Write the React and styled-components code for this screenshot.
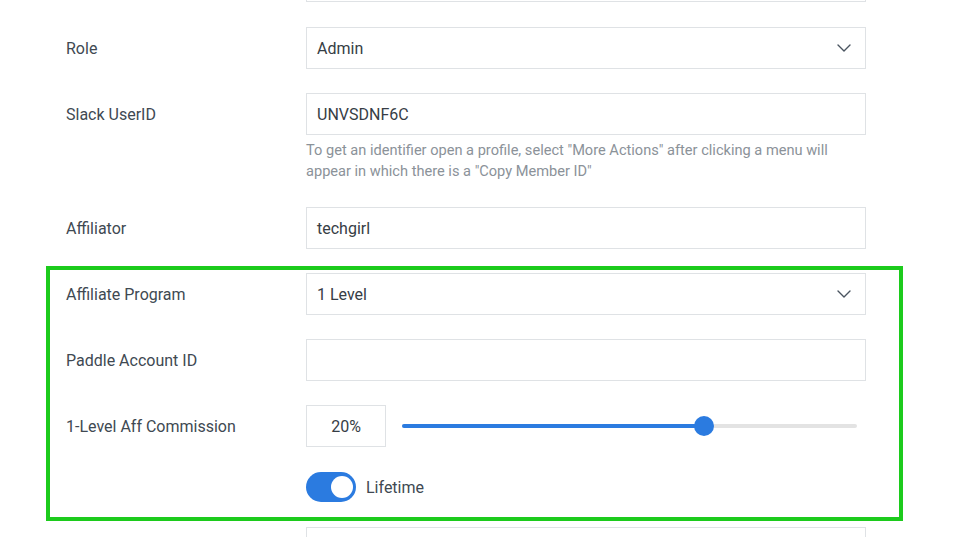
import styled, { createGlobalStyle } from 'styled-components'
import { ChevronDown } from 'lucide-react'

const GlobalStyle = createGlobalStyle`
    html, body {
        margin: 0;
        padding: 0;
        background: #ffffff;
        overflow: hidden;
    }
    body {
        font-family: Roboto, "Liberation Sans", sans-serif;
        color: #3d4651;
    }
`

export default function App() {
    return (
        <Page>
            <GlobalStyle />
            <Form>
                <Row first>
                    <Label />
                    <Field />
                </Row>

                <Row gap={25}>
                    <Label>Role</Label>
                    <Select value="Admin" />
                </Row>

                <Row gap={24}>
                    <Label>Slack UserID</Label>
                    <div>
                        <Field>UNVSDNF6C</Field>
                        <Help>
                            To get an identifier open a profile, select "More Actions" after clicking a menu will
                            appear in which there is a "Copy Member ID"
                        </Help>
                    </div>
                </Row>

                <Row gap={25}>
                    <Label>Affiliator</Label>
                    <Field>techgirl</Field>
                </Row>

                <Highlight>
                    <Row>
                        <Label>Affiliate Program</Label>
                        <Select value="1 Level" />
                    </Row>

                    <Row gap={24}>
                        <Label>Paddle Account ID</Label>
                        <Field />
                    </Row>

                    <Row gap={24}>
                        <Label>1-Level Aff Commission</Label>
                        <Commission>
                            <NumberBox>20%</NumberBox>
                            <Slider value={66.4} />
                        </Commission>
                    </Row>

                    <Row gap={25}>
                        <Label />
                        <ToggleLine>
                            <Toggle on>
                                <span />
                            </Toggle>
                            <ToggleText>Lifetime</ToggleText>
                        </ToggleLine>
                    </Row>
                </Highlight>

                <Row gap={6}>
                    <Label />
                    <Field />
                </Row>
            </Form>
        </Page>
    )
}

function Select({ value }) {
    return (
        <Field>
            <span>{value}</span>
            <ChevronDown size={24} strokeWidth={1.4} color="#4a5460" />
        </Field>
    )
}

function Slider({ value }) {
    return (
        <Track>
            <Fill style={{ width: `${value}%` }} />
            <Thumb style={{ left: `${value}%` }} />
        </Track>
    )
}

const Page = styled.div`
    width: 954px;
    height: 537px;
    overflow: hidden;
    padding-left: 66px;
    box-sizing: border-box;
`

const Form = styled.div`
    display: flex;
    flex-direction: column;
    margin-top: -40px;
`

const Row = styled.div`
    display: grid;
    grid-template-columns: 240px 560px;
    align-items: start;
    margin-top: ${props => props.first ? 0 : (props.gap || 0)}px;
`

const Label = styled.div`
    box-sizing: border-box;
    height: 30px;
    padding-top: 2px;
    font-size: 16px;
    line-height: 40px;
    color: #404952;
    white-space: nowrap;
`

const Field = styled.div`
    display: flex;
    align-items: center;
    justify-content: space-between;
    height: 42px;
    box-sizing: border-box;
    padding: 0 9px 0 10px;
    border: 1px solid #dfe2e5;
    background: #ffffff;
    font-size: 16px;
    color: #363d45;
`

const Help = styled.p`
    margin: 5px 0 0;
    font-size: 14.6px;
    line-height: 21px;
    color: #8b9299;
`

const Highlight = styled.div`
    margin: 17px 0 0 -20px;
    width: 857px;
    box-sizing: border-box;
    padding: 3px 34px 15px 16px;
    border: 4px solid #1ccb1c;
`

const Commission = styled.div`
    display: flex;
    align-items: center;
    height: 42px;
`

const NumberBox = styled.div`
    display: flex;
    align-items: center;
    justify-content: center;
    width: 80px;
    height: 42px;
    box-sizing: border-box;
    border: 1px solid #dfe2e5;
    font-size: 16px;
    color: #363d45;
`

const Track = styled.div`
    position: relative;
    flex: 0 0 455px;
    height: 4px;
    margin-left: 16px;
    background: #e3e3e3;
    border-radius: 2px;
`

const Fill = styled.div`
    height: 100%;
    background: #2b7be0;
    border-radius: 2px;
`

const Thumb = styled.div`
    position: absolute;
    top: 50%;
    width: 20px;
    height: 20px;
    border-radius: 50%;
    background: #2b7be0;
    transform: translate(-50%, -50%);
`

const ToggleLine = styled.div`
    display: flex;
    align-items: center;
    gap: 10px;
    height: 30px;
`

const Toggle = styled.div`
    position: relative;
    width: 50px;
    height: 30px;
    border-radius: 15px;
    background: ${props => props.on ? '#2b7be0' : '#cfd3d8'};

    span {
        position: absolute;
        top: 4px;
        left: ${props => props.on ? '25px' : '4px'};
        width: 22px;
        height: 22px;
        border-radius: 50%;
        background: #ffffff;
    }
`

const ToggleText = styled.span`
    font-size: 16px;
    color: #404952;
`
